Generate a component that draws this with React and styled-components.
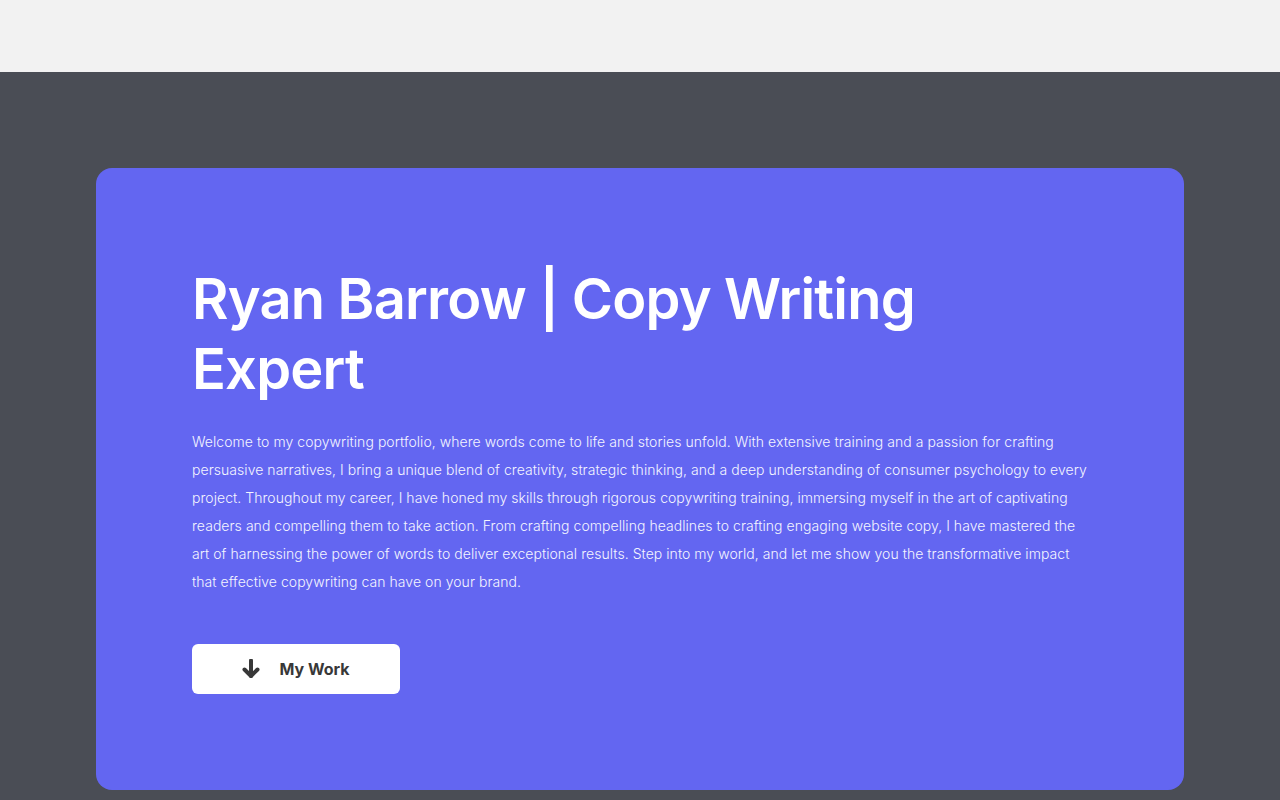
import React from "react";
import styled, { createGlobalStyle } from "styled-components";

const Global = createGlobalStyle`
  * { box-sizing: border-box; }
  body {
    margin: 0;
    font-family: Inter, "Noto Sans", sans-serif;
    background: #4a4d55;
  }
`;

const Header = styled.header`
  height: 72px;
  background: #f2f2f2;
`;

const Main = styled.main`
  padding: 96px 96px 10px;
`;

const Hero = styled.section`
  background: #6366f1;
  border-radius: 16px;
  padding: 96px;
  color: #fff;
`;

const Title = styled.h1`
  margin: 0;
  font-size: 56px;
  line-height: 70px;
  font-weight: 600;
  letter-spacing: -0.8px;
`;

const Intro = styled.p`
  margin: 24px 0 0;
  font-size: 14px;
  line-height: 28px;
  font-weight: 300;
  letter-spacing: 0.05px;
  color: #f4f5ff;
`;

const Button = styled.a`
  margin-top: 48px;
  width: 208px;
  height: 50px;
  display: flex;
  align-items: center;
  justify-content: center;
  gap: 19px;
  background: #fff;
  border-radius: 6px;
  color: #383838;
  font-weight: 700;
  font-size: 16px;
  text-decoration: none;
  cursor: pointer;
`;

const ArrowDown = () => (
  <svg width="18" height="20" viewBox="0 0 18 20" fill="none">
    <path d="M9 1.5V17" stroke="#383838" strokeWidth="4" strokeLinecap="round" />
    <path
      d="M2.5 10.5L9 17L15.5 10.5"
      stroke="#383838"
      strokeWidth="4"
      strokeLinecap="round"
      strokeLinejoin="round"
    />
  </svg>
);

export default function App() {
  return (
    <>
      <Global />
      <Header />
      <Main>
        <Hero>
          <Title>Ryan Barrow | Copy Writing Expert</Title>
          <Intro>
            Welcome to my copywriting portfolio, where words come to life and stories unfold. With extensive training and a passion for crafting persuasive narratives, I bring a unique blend of creativity, strategic thinking, and a deep understanding of consumer psychology to every project. Throughout my career, I have honed my skills through rigorous copywriting training, immersing myself in the art of captivating readers and compelling them to take action. From crafting compelling headlines to crafting engaging website copy, I have mastered the art of harnessing the power of words to deliver exceptional results. Step into my world, and let me show you the transformative impact that effective copywriting can have on your brand.
          </Intro>
          <Button>
            <ArrowDown />
            My Work
          </Button>
        </Hero>
      </Main>
    </>
  );
}
